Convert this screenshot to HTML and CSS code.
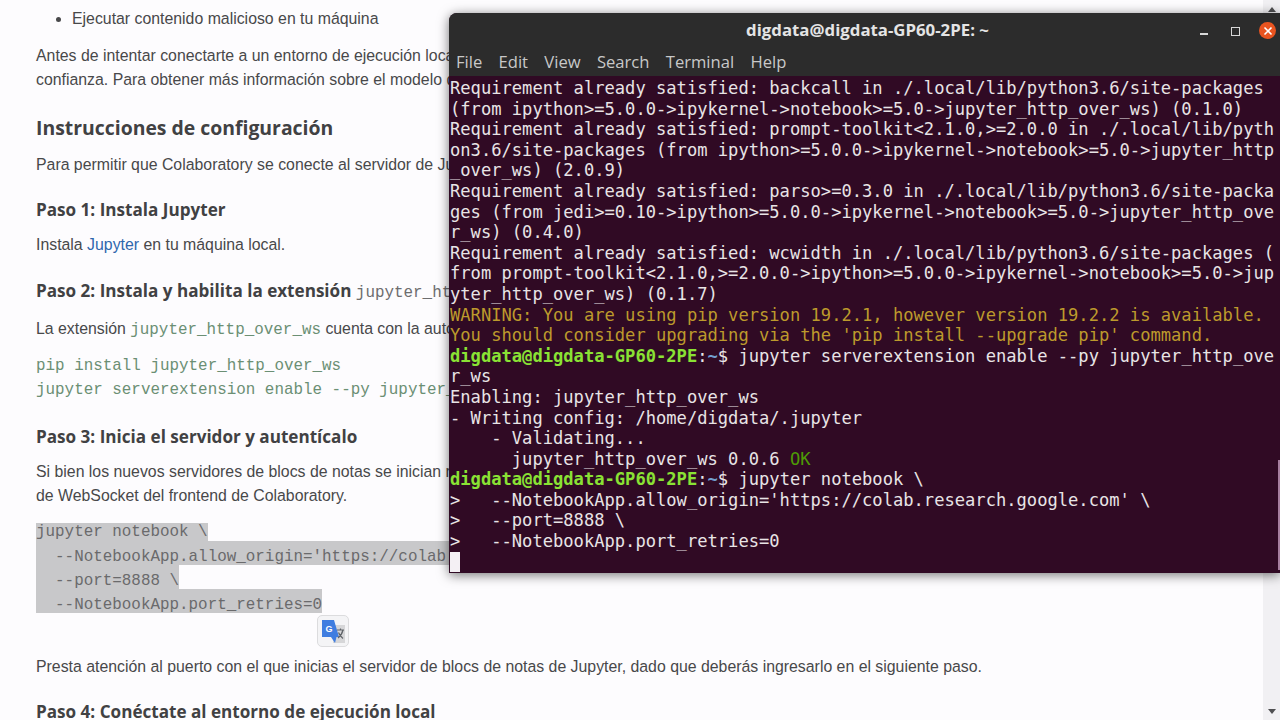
FILE: index.html
```html
<!DOCTYPE html>
<html lang="es">
<head>
<meta charset="utf-8">
<title>Entornos de ejecución locales</title>
<link rel="stylesheet" href="styles.css">
</head>
<body>
<main class="doc">
  <ul class="list"><li>Ejecutar contenido malicioso en tu máquina</li></ul>
  <p class="para first">Antes de intentar conectarte a un entorno de ejecución local, asegúrate de que el autor del cuaderno sea de<br>confianza. Para obtener más información sobre el modelo de seguridad de Jupyter, consulta la documentación.</p>
  <h2>Instrucciones de configuración</h2>
  <p class="para">Para permitir que Colaboratory se conecte al servidor de Jupyter que ejecutas de forma local, sigue estos pasos.</p>
  <h3>Paso 1: Instala Jupyter</h3>
  <p class="para">Instala <a href="#">Jupyter</a> en tu máquina local.</p>
  <h3 class="wide">Paso 2: Instala y habilita la extensión <code class="head-code">jupyter_http_over_ws</code></h3>
  <p class="para">La extensión <code class="inline">jupyter_http_over_ws</code> cuenta con la autoría del equipo de Colaboratory.</p>
  <pre class="snippet">pip install jupyter_http_over_ws
jupyter serverextension enable --py jupyter_http_over_ws</pre>
  <h3 class="after-code">Paso 3: Inicia el servidor y autentícalo</h3>
  <p class="para">Si bien los nuevos servidores de blocs de notas se inician normalmente, debes establecer un indicador para permitir conexiones<br>de WebSocket del frontend de Colaboratory.</p>
  <div class="selected">
    <pre class="sel top">jupyter notebook \</pre>
    <pre class="sel">  --NotebookApp.allow_origin='https://colab.research.google.com' \</pre>
    <pre class="sel">  --port=8888 \</pre>
    <pre class="sel">  --NotebookApp.port_retries=0</pre>
  </div>
  <p class="para after-selected">Presta atención al puerto con el que inicias el servidor de blocs de notas de Jupyter, dado que deberás ingresarlo en el siguiente paso.</p>
  <h3>Paso 4: Conéctate al entorno de ejecución local</h3>
</main>

<div class="pagebar">
  <span class="arrow up"></span>
  <span class="arrow down"></span>
</div>

<div class="translate">
  <svg width="24" height="24" viewBox="0 0 24 24" aria-hidden="true">
    <rect x="11" y="5" width="12" height="18" fill="#d6d6d8"/>
    <path d="M0 0H12L17 17H14.500L13 23L9 17H0Z" fill="#3f7de0"/>
    <path d="M15 10h7M18.500 8.500v1.500M21 10c-.8 3.500-2.500 6-5 8M16.500 12.500c1 2.500 2.500 4.500 4.500 6" fill="none" stroke="#5f6368" stroke-width="1.200"/>
    <text x="3.500" y="11.500" class="translate-g">G</text>
  </svg>
</div>

<section class="terminal">
  <header class="titlebar">
    <span class="title">digdata@digdata-GP60-2PE: ~</span>
    <span class="controls">
      <span class="min"></span>
      <span class="max"></span>
      <span class="close"><svg width="14" height="14" viewBox="0 0 14 14" aria-hidden="true"><path d="M3.500 3.500l7 7M10.500 3.500l-7 7" stroke="#fff" stroke-width="1.600"/></svg></span>
    </span>
  </header>
  <nav class="menubar"><span>File</span><span>Edit</span><span>View</span><span>Search</span><span>Terminal</span><span>Help</span></nav>
  <div class="screen">
<pre class="output">Requirement already satisfied: backcall in ./.local/lib/python3.6/site-packages
(from ipython&gt;=5.0.0-&gt;ipykernel-&gt;notebook&gt;=5.0-&gt;jupyter_http_over_ws) (0.1.0)
Requirement already satisfied: prompt-toolkit&lt;2.1.0,&gt;=2.0.0 in ./.local/lib/pyth
on3.6/site-packages (from ipython&gt;=5.0.0-&gt;ipykernel-&gt;notebook&gt;=5.0-&gt;jupyter_http
_over_ws) (2.0.9)
Requirement already satisfied: parso&gt;=0.3.0 in ./.local/lib/python3.6/site-packa
ges (from jedi&gt;=0.10-&gt;ipython&gt;=5.0.0-&gt;ipykernel-&gt;notebook&gt;=5.0-&gt;jupyter_http_ove
r_ws) (0.4.0)
Requirement already satisfied: wcwidth in ./.local/lib/python3.6/site-packages (
from prompt-toolkit&lt;2.1.0,&gt;=2.0.0-&gt;ipython&gt;=5.0.0-&gt;ipykernel-&gt;notebook&gt;=5.0-&gt;jup
yter_http_over_ws) (0.1.7)
<span class="warn">WARNING: You are using pip version 19.2.1, however version 19.2.2 is available.
You should consider upgrading via the 'pip install --upgrade pip' command.</span>
<span class="prompt">digdata@digdata-GP60-2PE</span>:<span class="path">~</span>$ jupyter serverextension enable --py jupyter_http_ove
r_ws
Enabling: jupyter_http_over_ws
- Writing config: /home/digdata/.jupyter
    - Validating...
      jupyter_http_over_ws 0.0.6 <span class="ok">OK</span>
<span class="prompt">digdata@digdata-GP60-2PE</span>:<span class="path">~</span>$ jupyter notebook \
&gt;   --NotebookApp.allow_origin='https://colab.research.google.com' \
&gt;   --port=8888 \
&gt;   --NotebookApp.port_retries=0
<span class="cursor"> </span></pre>
    <span class="thumb"></span>
  </div>
</section>
</body>
</html>
```
FILE: styles.css
```css
* { box-sizing: border-box; }
html, body { margin: 0; height: 720px; overflow: hidden; }
body { background: #fdfcfe; color: #48484a; font-family: "Liberation Sans", Arial, sans-serif; font-size: 15.85px; line-height: 24px; position: relative; }

.doc { padding: 7px 0 0 36px; white-space: nowrap; overflow: hidden; height: 720px; }
.list { margin: 0; padding: 0 0 0 36px; }
.para { margin: 0; }
.para.first { margin-top: 13px; }
a { color: #2f66ad; text-decoration: none; }
h2, h3 { font-family: "Open Sans", sans-serif; font-weight: 700; color: #414143; margin: 0; }
h2 { font-size: 19.4px; line-height: 32px; margin: 20px 0 9px; }
h3 { font-size: 17.1px; line-height: 24px; margin: 21px 0 11px; }
h3.wide { margin: 22px 0 14px; }
h3.after-code { margin: 23px 0 11px; }
code, pre { font-family: "Liberation Mono", "Courier New", monospace; }
code { line-height: 1; }
.head-code { font-size: 15.9px; font-weight: 400; color: #6d6d6f; }
.inline { font-size: 15.9px; color: #6b8f74; }
pre { margin: 0; font-size: 15.9px; line-height: 24px; }
.snippet { margin-top: 13px; color: #6b8f74; }
.selected { margin-top: 15px; color: #6a6a6c; }
.sel { background: #c8c8ca; width: fit-content; padding-top: 8px; line-height: 16px; }
.sel.top { padding: 1px 0; line-height: 16px; }
.para.after-selected { margin-top: 42px; }

.pagebar { position: absolute; top: 0; right: 0; width: 17px; height: 720px; background: #f1f0f3; }
.arrow { position: absolute; left: 5px; width: 0; height: 0; border-left: 4px solid transparent; border-right: 4px solid transparent; }
.arrow.up { top: 7px; border-bottom: 5px solid #505052; }
.arrow.down { bottom: 6px; border-top: 5px solid #505052; }

.translate { position: absolute; left: 317px; top: 615px; width: 32px; height: 32px; padding: 4px; background: #f4f4f6; border: 1px solid #dcdcde; border-radius: 5px; }
.translate svg { display: block; }
.translate-g { font-family: "Liberation Sans", sans-serif; font-size: 9px; font-weight: 700; fill: #fff; }

.terminal { position: absolute; left: 449px; top: 13px; width: 831px; height: 560px; border-radius: 8px 0 0 0; background: #300a24; box-shadow: 0 2px 12px rgba(0,0,0,.55); }
.titlebar { height: 35px; background: #2c2c2c; border-radius: 8px 0 0 0; display: flex; align-items: center; justify-content: center; position: relative; }
.title { font-family: "Open Sans", sans-serif; font-weight: 700; font-size: 16.8px; color: #e4e4e4; margin: -2px 0 0 6px; }
.controls { position: absolute; right: 0; top: 0; height: 35px; display: flex; align-items: center; }
.min { width: 8px; height: 2px; background: #d8d8d8; margin-right: 23px; position: relative; top: 3px; }
.max { width: 9px; height: 9px; border: 1.500px solid #d8d8d8; margin-right: 19px; position: relative; top: 1px; }
.close { width: 17px; height: 17px; border-radius: 50%; background: #e95420; display: flex; align-items: center; justify-content: center; margin-right: 4px; }
.menubar { height: 28px; background: #2c2c2c; display: flex; gap: 16.3px; padding: 4px 0 0 7px; font-family: "Open Sans", sans-serif; font-size: 16.6px; line-height: 20px; color: #c8c8c8; }
.screen { position: relative; height: 497px; background: #300a24; overflow: hidden; }
.output { font-family: "DejaVu Sans Mono", monospace; font-size: 17.12px; line-height: 20.6px; color: #e8e4e6; margin: 0; padding: 2px 0 0 1px; }
.warn { color: #bd9a2c; }
.prompt { color: #8ae234; font-weight: 700; }
.path { color: #729fcf; font-weight: 700; }
.ok { color: #4e9a06; }
.cursor { display: inline-block; width: 10.3px; background: #f4f0f4; }
.thumb { position: absolute; right: 0; top: 384px; width: 2px; height: 110px; background: #a67e9f; }
```
